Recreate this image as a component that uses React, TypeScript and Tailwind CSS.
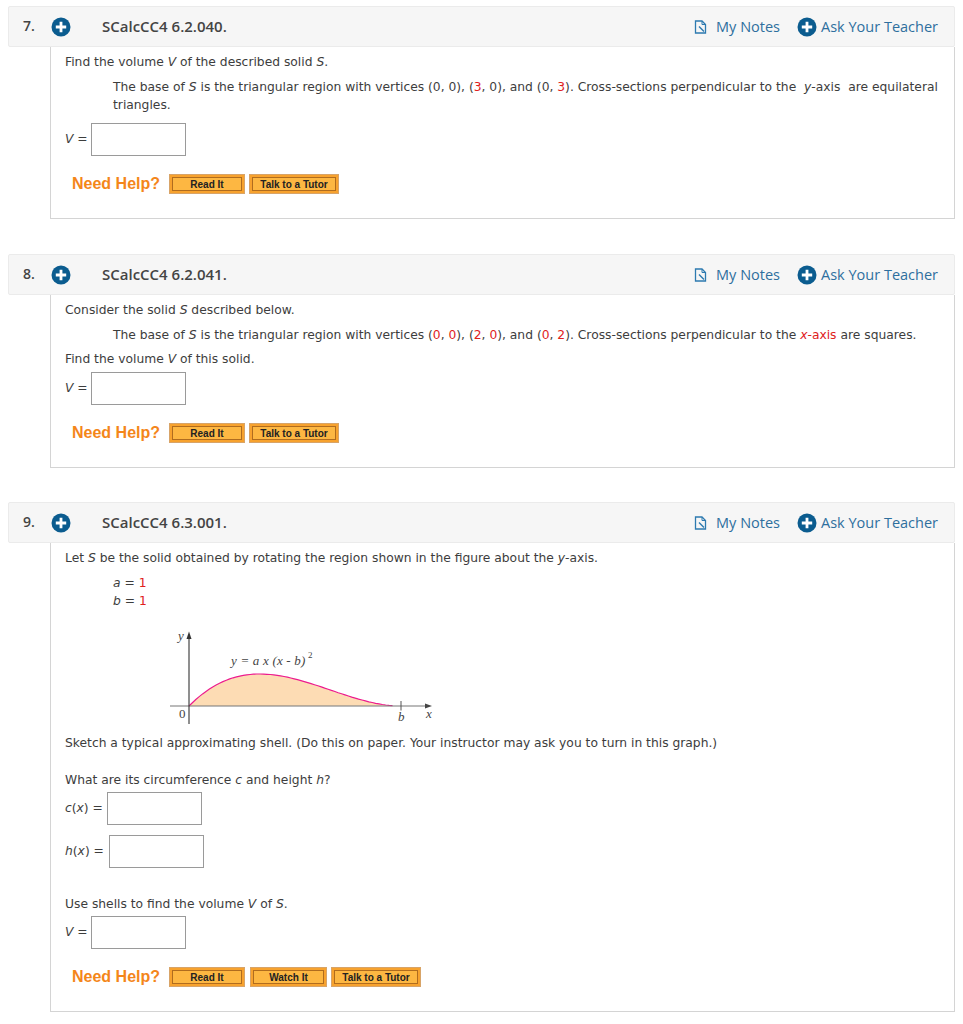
import React from "react";

function Plus({ size = 20 }: { size?: number }) {
  return (
    <svg width={size} height={size} viewBox="0 0 20 20" className="shrink-0">
      <circle cx="10" cy="10" r="9.5" fill="#0b5c8f" />
      <path d="M10 4.8v10.4M4.8 10h10.4" stroke="#fff" strokeWidth="2.8" />
    </svg>
  );
}

function NoteIcon() {
  return (
    <svg width="13" height="14" viewBox="0 0 13 14" fill="none" className="shrink-0">
      <path d="M1.5 1h6.5l3.5 3.5V13h-10z" stroke="#2d7ab0" strokeWidth="1.3" />
      <path d="M5 6.5l5 5" stroke="#2d7ab0" strokeWidth="1.4" />
      <path d="M8 1v3.5h3.5" stroke="#2d7ab0" strokeWidth="1" />
    </svg>
  );
}

function Header({ n, code }: { n: string; code: string }) {
  return (
    <div className="flex h-[41px] items-center rounded-[2px] border border-[#ebebeb] bg-[#f6f6f6] font-['Open_Sans',sans-serif]">
      <span className="ml-[14px] w-[28px] -translate-y-[1px] text-[14px] font-semibold text-[#444]">{n}</span>
      <Plus />
      <span className="ml-[31px] text-[15px] font-semibold text-[#444]">{code}</span>
      <div className="ml-auto flex items-center pr-[16px] text-[14.5px] text-[#2e6f9e]">
        <NoteIcon />
        <span className="ml-[9px] font-medium">My Notes</span>
        <span className="ml-[17px]"><Plus /></span>
        <span className="ml-[4px] font-medium">Ask Your Teacher</span>
      </div>
    </div>
  );
}

function I({ children }: { children: React.ReactNode }) {
  return <i className="italic">{children}</i>;
}

function R({ children }: { children: React.ReactNode }) {
  return <span className="text-[#e0201b]">{children}</span>;
}

function Answer({ label, ml = "ml-[3px]" }: { label: React.ReactNode; ml?: string }) {
  return (
    <div className="flex items-center">
      <span>{label}</span>
      <span className={`${ml} h-[33px] w-[95px] border border-[#9a9a9a] bg-white`} />
    </div>
  );
}

function HelpButton({ label, w }: { label: string; w: string }) {
  return (
    <div className={`flex h-[20px] ${w} items-center justify-center border border-[#d8a468] bg-[#f7a22e] p-[2px]`}>
      <div className="flex h-full w-full items-center justify-center border border-[#b06c1e] bg-[#fdb742] font-['Liberation_Sans',sans-serif] text-[10px] font-bold text-[#222]">
        {label}
      </div>
    </div>
  );
}

function NeedHelp({ watch }: { watch?: boolean }) {
  return (
    <div className="ml-[7px] flex items-center">
      <span className="w-[97px] font-['Liberation_Sans',sans-serif] text-[16px] font-bold text-[#f4861a]">Need Help?</span>
      <div className="flex gap-[4px]">
        <HelpButton label="Read It" w="w-[76px]" />
        {watch && <div className="ml-[1px]"><HelpButton label="Watch It" w="w-[77px]" /></div>}
        <HelpButton label="Talk to a Tutor" w="w-[90px]" />
      </div>
    </div>
  );
}

function Graph() {
  const ox = 19;
  const oy = 81;
  const pts: string[] = [];
  for (let i = 0; i <= 60; i++) {
    const t = (i / 60) * 0.96;
    const x = ox + t * 212;
    const y = oy - 216 * t * (t - 1) * (t - 1);
    pts.push(`${x.toFixed(1)},${y.toFixed(1)}`);
  }
  const curve = pts.join(" ");
  return (
    <svg width="275" height="106" viewBox="0 0 275 106" className="block">
      <polygon points={`${ox},${oy} ${curve}`} fill="#fddcb4" />
      <polyline points={curve} fill="none" stroke="#ec1c8e" strokeWidth="1.2" />
      <path d="M0 81H258" stroke="#777" strokeWidth="1.2" />
      <path d="M255 78.5l7 2.5-7 2.5z" fill="#444" />
      <path d="M19 99V10" stroke="#333" strokeWidth="1.1" />
      <path d="M16.5 14L19 6.5l2.5 7.5z" fill="#333" />
      <path d="M231 76v9.5" stroke="#555" strokeWidth="1" />
      <g fontFamily="'Liberation Serif',serif" fontSize="13" fill="#444">
        <text x="8" y="15" fontStyle="italic">y</text>
        <text x="61" y="40" fontStyle="italic" letterSpacing="0.2">y = a x (x - b)</text>
        <text x="138" y="33" fontSize="9">2</text>
        <text x="9" y="93">0</text>
        <text x="228" y="96" fontStyle="italic">b</text>
        <text x="256" y="93" fontStyle="italic">x</text>
      </g>
    </svg>
  );
}

export default function App() {
  return (
    <div className="min-h-[1024px] w-[963px] overflow-hidden bg-white pl-[8px] pr-[8px] pt-[6px] text-[#3d3d3d]">
      <Header n="7." code="SCalcCC4 6.2.040." />
      <div className="ml-[42px] h-[172px] border border-t-0 border-[#d4d4d4] pl-[14px] pr-[14px] font-['DejaVu_Sans',sans-serif] text-[12.3px]">
        <p className="pt-[8px] leading-[15px]">Find the volume <I>V</I> of the described solid <I>S</I>.</p>
        <p className="ml-[48px] mt-[8px] leading-[18px]">
          The base of <I>S</I> is the triangular region with vertices (0, 0), (<R>3</R>, 0), and (0, <R>3</R>). Cross-sections perpendicular to the &nbsp;<I>y</I>-axis&nbsp; are equilateral triangles.
        </p>
        <div className="mt-[9px]"><Answer label={<><I>V</I> =</>} /></div>
        <div className="mt-[16px]"><NeedHelp /></div>
      </div>

      <div className="mt-[35px]"><Header n="8." code="SCalcCC4 6.2.041." /></div>
      <div className="ml-[42px] h-[173px] border border-t-0 border-[#d4d4d4] pl-[14px] pr-[14px] font-['DejaVu_Sans',sans-serif] text-[12.3px]">
        <p className="pt-[8px] leading-[15px]">Consider the solid <I>S</I> described below.</p>
        <p className="ml-[48px] mt-[8px] leading-[18px]">
          The base of <I>S</I> is the triangular region with vertices (<R>0</R>, <R>0</R>), (<R>2</R>, <R>0</R>), and (<R>0</R>, <R>2</R>). Cross-sections perpendicular to the <R><I>x</I>-axis</R> are squares.
        </p>
        <p className="mt-[8px] leading-[15px]">Find the volume <I>V</I> of this solid.</p>
        <div className="mt-[5px]"><Answer label={<><I>V</I> =</>} /></div>
        <div className="mt-[16px]"><NeedHelp /></div>
      </div>

      <div className="mt-[34px]"><Header n="9." code="SCalcCC4 6.3.001." /></div>
      <div className="ml-[42px] h-[469px] border border-t-0 border-[#d4d4d4] pl-[14px] pr-[14px] font-['DejaVu_Sans',sans-serif] text-[12.3px]">
        <p className="pt-[8px] leading-[15px]">Let <I>S</I> be the solid obtained by rotating the region shown in the figure about the <I>y</I>-axis.</p>
        <div className="ml-[48px] mt-[8px] leading-[18px]">
          <div><I>a</I> = <R>1</R></div>
          <div><I>b</I> = <R>1</R></div>
        </div>
        <div className="ml-[105px] mt-[15px]"><Graph /></div>
        <p className="mt-[5px] leading-[15px]">Sketch a typical approximating shell. (Do this on paper. Your instructor may ask you to turn in this graph.)</p>
        <p className="mt-[22px] leading-[15px]">What are its circumference <I>c</I> and height <I>h</I>?</p>
        <div className="mt-[4px]"><Answer ml="ml-[4px]" label={<><I>c</I>(<I>x</I>) =</>} /></div>
        <div className="mt-[10px]"><Answer ml="ml-[5px]" label={<><I>h</I>(<I>x</I>) =</>} /></div>
        <p className="mt-[29px] leading-[15px]">Use shells to find the volume <I>V</I> of <I>S</I>.</p>
        <div className="mt-[4px]"><Answer label={<><I>V</I> =</>} /></div>
        <div className="mt-[16px]"><NeedHelp watch /></div>
      </div>
    </div>
  );
}
